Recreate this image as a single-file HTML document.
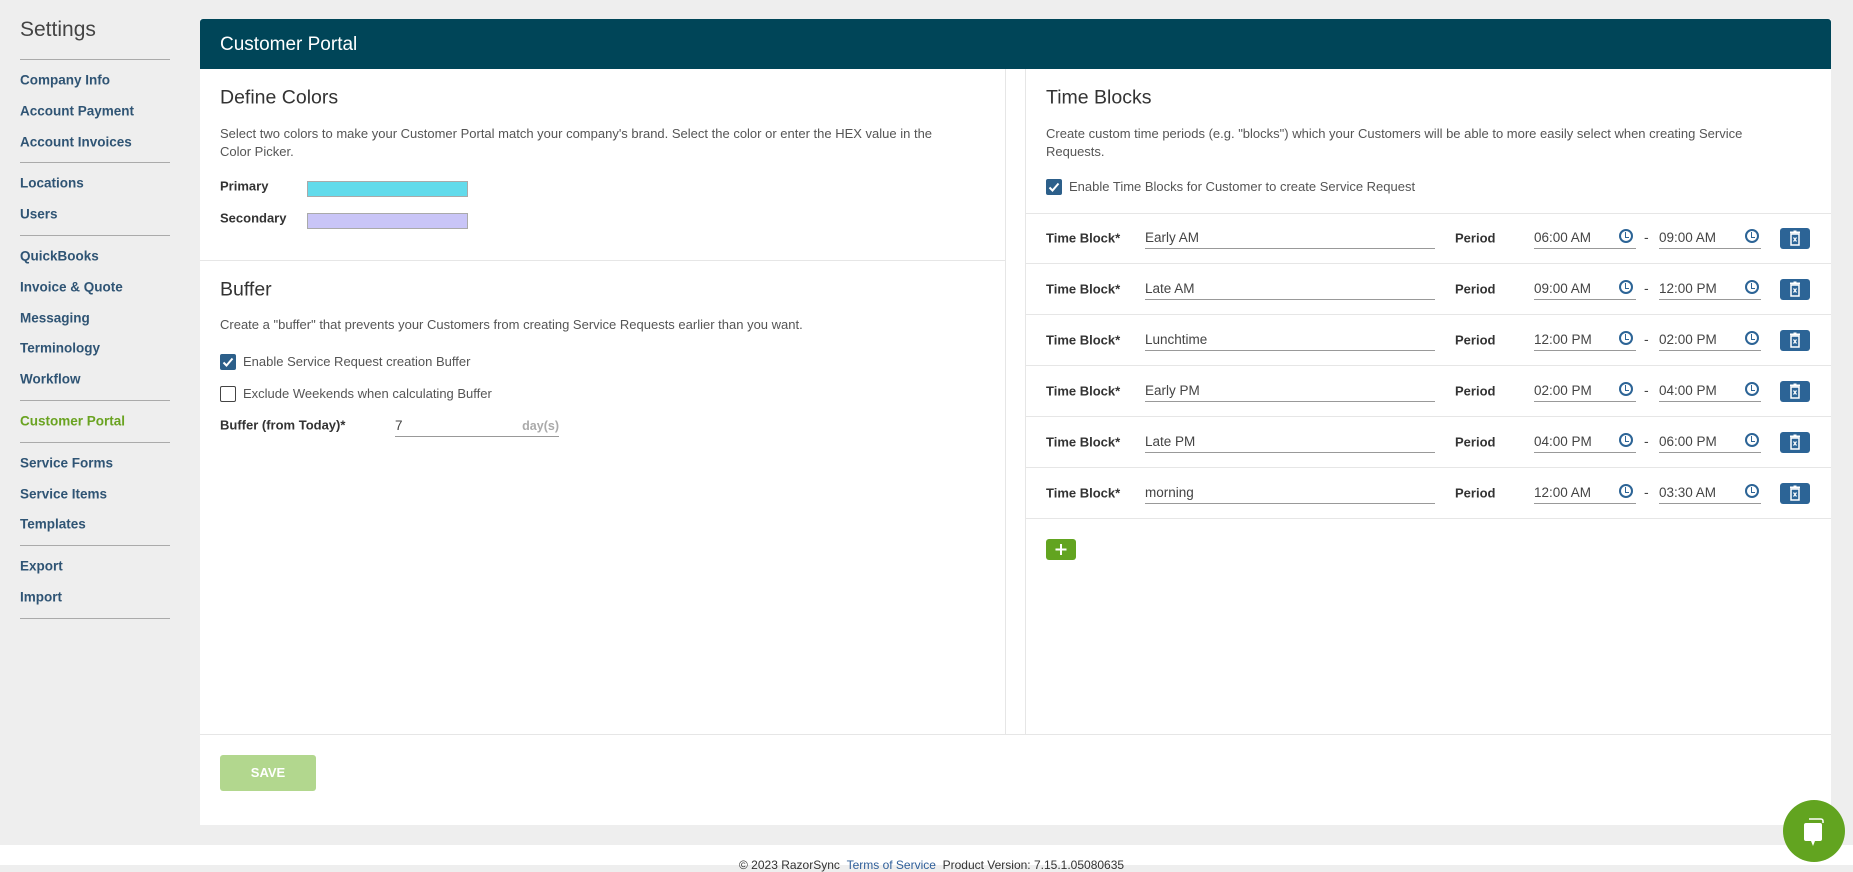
<!DOCTYPE html>
<html><head><meta charset="utf-8"><style>
*{box-sizing:border-box;margin:0;padding:0}
body{width:1853px;height:865px;overflow:hidden;background:#eeeeee;font-family:"Liberation Sans",sans-serif;color:#444;position:relative}
.a{position:absolute;white-space:nowrap}
.side{left:20px;font-size:13.5px;font-weight:bold;color:#2f5474;transform:translateY(-50%)}
.hr{position:absolute;left:20px;width:150px;height:1px;background:#aaa}
.h2{font-size:19.5px;color:#333;transform:translateY(-50%)}
.p{font-size:13px;color:#555;line-height:18px}
.lbl{font-size:13px;font-weight:bold;color:#333;transform:translateY(-50%)}
.cb{position:absolute;width:16px;height:16px;border-radius:2px}
.cb.on{background:#2c5f8a}
.cb.off{border:1.5px solid #444;background:#fff}
.inp{position:absolute;border-bottom:1px solid #999;font-size:13.5px;color:#444;padding-top:5px}
.trash{position:absolute;width:30px;height:21px;background:#2c6496;border-radius:3px}
.clk{position:absolute;width:14px;height:14px;border:2px solid #2c6496;border-radius:50%}
.clk:after{content:"";position:absolute;left:4px;top:1px;width:3px;height:5px;border-left:1.5px solid #2c6496;border-bottom:1.5px solid #2c6496}
</style></head><body>
<div class="a" style="left:20px;top:30px;transform:translateY(-50%);font-size:21px;color:#444">Settings</div>
<div class="hr" style="top:59px"></div>
<div class="a side" style="top:80px">Company Info</div>
<div class="a side" style="top:111px">Account Payment</div>
<div class="a side" style="top:142px">Account Invoices</div>
<div class="hr" style="top:162px"></div>
<div class="a side" style="top:183px">Locations</div>
<div class="a side" style="top:214px">Users</div>
<div class="hr" style="top:235px"></div>
<div class="a side" style="top:256px">QuickBooks</div>
<div class="a side" style="top:287px">Invoice &amp; Quote</div>
<div class="a side" style="top:318px">Messaging</div>
<div class="a side" style="top:348px">Terminology</div>
<div class="a side" style="top:379px">Workflow</div>
<div class="hr" style="top:400px"></div>
<div class="a side" style="top:421px;color:#6aa321">Customer Portal</div>
<div class="hr" style="top:442px"></div>
<div class="a side" style="top:463px">Service Forms</div>
<div class="a side" style="top:494px">Service Items</div>
<div class="a side" style="top:524px">Templates</div>
<div class="hr" style="top:545px"></div>
<div class="a side" style="top:566px">Export</div>
<div class="a side" style="top:597px">Import</div>
<div class="hr" style="top:618px"></div>

<div class="a" style="left:200px;top:19px;width:1631px;height:806px;background:#fff"></div>
<div class="a" style="left:200px;top:19px;width:1631px;height:50px;background:#004558;border-radius:3px 3px 0 0"></div>
<div class="a" style="left:220px;top:45px;transform:translateY(-50%);font-size:19px;color:#fff">Customer Portal</div>
<div class="a" style="left:1005px;top:69px;width:1px;height:665px;background:#e6e6e6"></div>
<div class="a" style="left:1025px;top:69px;width:1px;height:665px;background:#e6e6e6"></div>
<div class="a" style="left:200px;top:260px;width:805px;height:1px;background:#e6e6e6"></div>
<div class="a" style="left:200px;top:734px;width:1631px;height:1px;background:#e6e6e6"></div>

<div class="a h2" style="left:220px;top:98px">Define Colors</div>
<div class="a p" style="left:220px;top:125px">Select two colors to make your Customer Portal match your company's brand. Select the color or enter the HEX value in the<br>Color Picker.</div>
<div class="a lbl" style="left:220px;top:186px">Primary</div>
<div class="a" style="left:307px;top:181px;width:161px;height:16px;background:#62dbeb;border:1px solid #aaa"></div>
<div class="a lbl" style="left:220px;top:218px">Secondary</div>
<div class="a" style="left:307px;top:213px;width:161px;height:16px;background:#c9c5f7;border:1px solid #aaa"></div>

<div class="a h2" style="left:220px;top:290px">Buffer</div>
<div class="a p" style="left:220px;top:316px">Create a "buffer" that prevents your Customers from creating Service Requests earlier than you want.</div>
<div class="cb on" style="left:220px;top:354px"><svg width="16" height="16"><path d="M3.5 8.5l3 3 6-7" stroke="#fff" stroke-width="2" fill="none"/></svg></div>
<div class="a p" style="left:243px;top:353px">Enable Service Request creation Buffer</div>
<div class="cb off" style="left:220px;top:386px"></div>
<div class="a p" style="left:243px;top:385px">Exclude Weekends when calculating Buffer</div>
<div class="a lbl" style="left:220px;top:425px">Buffer (from Today)*</div>
<div class="inp" style="left:395px;top:413px;width:164px;height:24px">7<span style="position:absolute;right:0;top:6px;color:#aaa;font-weight:bold;font-size:12.5px">day(s)</span></div>

<div class="a h2" style="left:1046px;top:98px">Time Blocks</div>
<div class="a p" style="left:1046px;top:125px">Create custom time periods (e.g. "blocks") which your Customers will be able to more easily select when creating Service<br>Requests.</div>
<div class="cb on" style="left:1046px;top:179px"><svg width="16" height="16"><path d="M3.5 8.5l3 3 6-7" stroke="#fff" stroke-width="2" fill="none"/></svg></div>
<div class="a p" style="left:1069px;top:178px">Enable Time Blocks for Customer to create Service Request</div>
<div class="a" style="left:1025px;top:213px;width:806px;height:1px;background:#e6e6e6"></div>

<div id="rows"></div>
<script>
var d=[["Early AM","06:00 AM","09:00 AM"],["Late AM","09:00 AM","12:00 PM"],["Lunchtime","12:00 PM","02:00 PM"],["Early PM","02:00 PM","04:00 PM"],["Late PM","04:00 PM","06:00 PM"],["morning","12:00 AM","03:30 AM"]];
var h="";
d.forEach(function(r,i){var c=238+i*51;
h+='<div class="a lbl" style="left:1046px;top:'+c+'px">Time Block*</div>';
h+='<div class="inp" style="left:1145px;top:'+(c-13)+'px;width:290px;height:24px">'+r[0]+'</div>';
h+='<div class="a lbl" style="left:1455px;top:'+c+'px">Period</div>';
h+='<div class="inp" style="left:1534px;top:'+(c-13)+'px;width:102px;height:24px">'+r[1]+'</div>';
h+='<div class="clk" style="left:1619px;top:'+(c-9)+'px"></div>';
h+='<div class="a" style="left:1644px;top:'+(c-9)+'px;font-size:14px">-</div>';
h+='<div class="inp" style="left:1659px;top:'+(c-13)+'px;width:102px;height:24px">'+r[2]+'</div>';
h+='<div class="clk" style="left:1745px;top:'+(c-9)+'px"></div>';
h+='<div class="trash" style="left:1780px;top:'+(c-10)+'px"><svg width="30" height="21"><rect x="11" y="6" width="8" height="11" fill="none" stroke="#fff" stroke-width="1.5"/><rect x="10" y="3.5" width="10" height="1.8" fill="#fff"/><rect x="13.5" y="2.5" width="3" height="1.5" fill="#fff"/><path d="M13.5 9.5l3 4M16.5 9.5l-3 4" stroke="#fff" stroke-width="1.2"/></svg></div>';
h+='<div class="a" style="left:1025px;top:'+(c+25)+'px;width:806px;height:1px;background:#e6e6e6"></div>';
});
document.getElementById("rows").innerHTML=h;
</script>
<div class="a" style="left:1046px;top:539px;width:30px;height:21px;background:#62a420;border-radius:3px"><svg width="30" height="21"><path d="M15 5v11M9.5 10.5h11" stroke="#fff" stroke-width="2"/></svg></div>

<div class="a" style="left:220px;top:755px;width:96px;height:36px;background:#b2d78e;border-radius:3px;color:#fff;font-weight:bold;font-size:13px;text-align:center;line-height:36px">SAVE</div>

<div class="a" style="left:0;top:845px;width:1853px;height:20px;background:#fff"></div>
<div class="a" style="left:739px;top:858px;font-size:12px;color:#333">© 2023 RazorSync &nbsp;<span style="color:#2f5f9a">Terms of Service</span> &nbsp;Product Version: 7.15.1.05080635</div>
<div class="a" style="left:1783px;top:800px;width:62px;height:62px;border-radius:50%;background:#62a420"><svg width="62" height="62"><path d="M26 19h12a2 2 0 0 1 2 2v2" stroke="#fff" stroke-width="1.5" fill="none"/><path d="M23 23h14a2 2 0 0 1 2 2v14a2 2 0 0 1-2 2h-5l-2 5-2-5h-5a2 2 0 0 1-2-2V25a2 2 0 0 1 2-2z" fill="#fff"/></svg></div>
</body></html>
